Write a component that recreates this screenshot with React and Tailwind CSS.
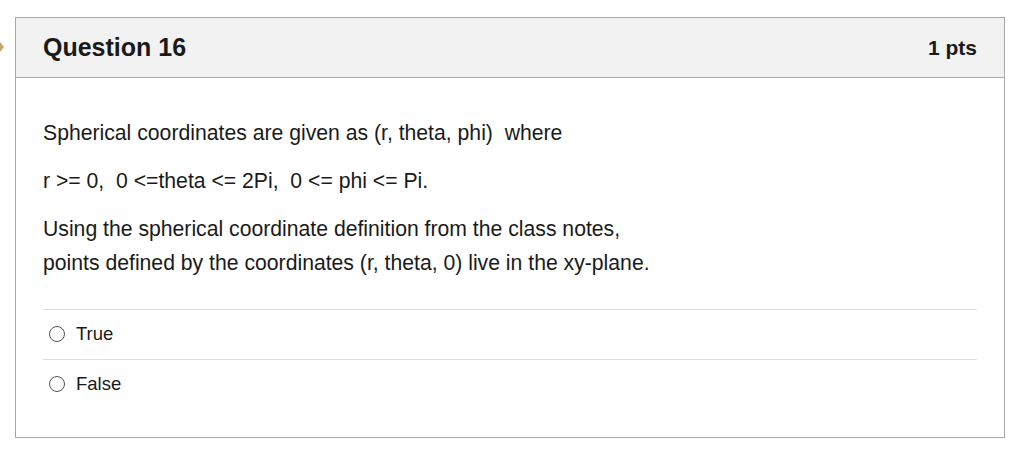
export default function App() {
  const font = { fontFamily: '"Liberation Sans", Arial, sans-serif' };
  return (
    <div className="w-[1024px] h-[468px] bg-white relative" style={font}>
      <div className="absolute left-0 top-[42px] w-0 h-0 border-y-[5px] border-y-transparent border-l-[4px] border-l-[#c8a46a]" />
      <div className="pt-[17px] pl-[15px]">
        <div className="w-[990px] h-[421px] border border-[#a9a9a9] flex flex-col">
          <div className="h-[60px] bg-[#f2f2f2] border-b border-[#a9a9a9] flex items-center justify-between pl-[27px] pr-[27px]">
            <span className="text-[25px] font-bold text-[#1a1a1a]">Question 16</span>
            <span className="text-[21px] font-bold text-[#1a1a1a]">1 pts</span>
          </div>
          <div className="pl-[27px] pr-[27px] pt-[38px] text-[#1a1a1a]">
            <p className="text-[21.2px] leading-[34px] mb-[14px]">Spherical coordinates are given as (r, theta, phi)&nbsp; where</p>
            <p className="text-[21.2px] leading-[34px] mb-[14px]">r &gt;= 0,&nbsp; 0 &lt;=theta &lt;= 2Pi,&nbsp; 0 &lt;= phi &lt;= Pi.</p>
            <p className="text-[21.2px] leading-[34px]">Using the spherical coordinate definition from the class notes,<br />points defined by the coordinates (r, theta, 0) live in the xy-plane.</p>
            <div className="mt-[29px] border-t border-[#dddddd]">
              <div className="h-[50px] flex items-center pl-[6px] pb-[2px] border-b border-[#dddddd]">
                <span className="w-[16px] h-[16px] rounded-full border border-[#555] bg-white" />
                <span className="ml-[11px] text-[18.5px]">True</span>
              </div>
              <div className="h-[50px] flex items-center pl-[6px] pb-[2px]">
                <span className="w-[16px] h-[16px] rounded-full border border-[#555] bg-white" />
                <span className="ml-[11px] text-[18.5px]">False</span>
              </div>
            </div>
          </div>
        </div>
      </div>
    </div>
  );
}
